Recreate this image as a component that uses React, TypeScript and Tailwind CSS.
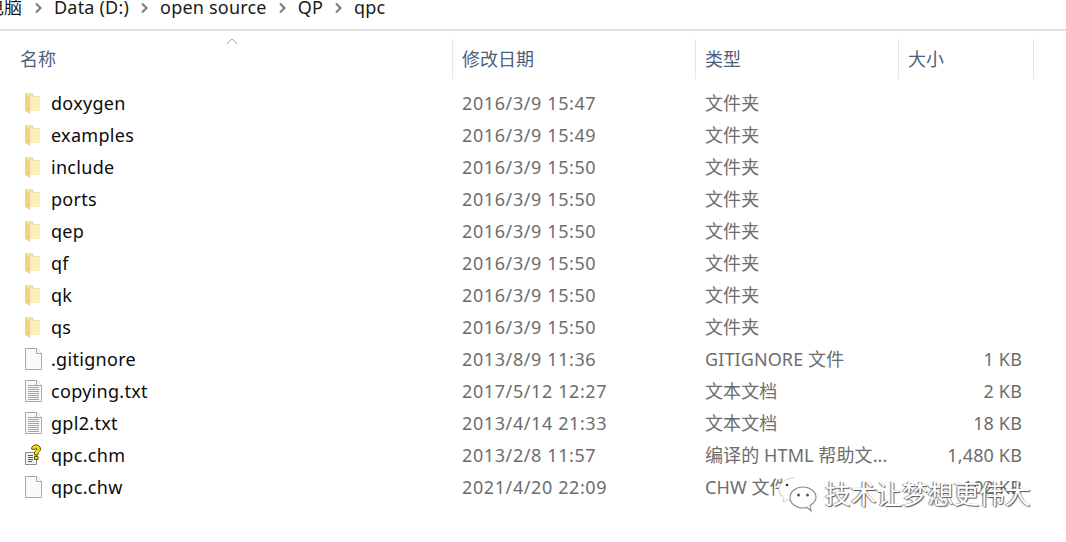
import React from 'react'

type Kind = 'folder' | 'blank' | 'text' | 'help'

type Row = {
  name: string
  date: string
  type: string
  size?: string
  kind: Kind
}

const rows: Row[] = [
  { name: 'doxygen', date: '2016/3/9 15:47', type: '文件夹', kind: 'folder' },
  { name: 'examples', date: '2016/3/9 15:49', type: '文件夹', kind: 'folder' },
  { name: 'include', date: '2016/3/9 15:50', type: '文件夹', kind: 'folder' },
  { name: 'ports', date: '2016/3/9 15:50', type: '文件夹', kind: 'folder' },
  { name: 'qep', date: '2016/3/9 15:50', type: '文件夹', kind: 'folder' },
  { name: 'qf', date: '2016/3/9 15:50', type: '文件夹', kind: 'folder' },
  { name: 'qk', date: '2016/3/9 15:50', type: '文件夹', kind: 'folder' },
  { name: 'qs', date: '2016/3/9 15:50', type: '文件夹', kind: 'folder' },
  { name: '.gitignore', date: '2013/8/9 11:36', type: 'GITIGNORE 文件', size: '1 KB', kind: 'blank' },
  { name: 'copying.txt', date: '2017/5/12 12:27', type: '文本文档', size: '2 KB', kind: 'text' },
  { name: 'gpl2.txt', date: '2013/4/14 21:33', type: '文本文档', size: '18 KB', kind: 'text' },
  { name: 'qpc.chm', date: '2013/2/8 11:57', type: '编译的 HTML 帮助文...', size: '1,480 KB', kind: 'help' },
  { name: 'qpc.chw', date: '2021/4/20 22:09', type: 'CHW 文件', size: '102 KB', kind: 'blank' },
]

const crumbs = ['Data (D:)', 'open source', 'QP', 'qpc']

const Chevron = () => (
  <svg width="7" height="12" viewBox="0 0 7 12" className="mt-[2px] shrink-0">
    <path d="M1 1.500 5.500 6 1 10.500" fill="none" stroke="#808080" strokeWidth="2.200" />
  </svg>
)

const FolderIcon = () => (
  <svg width="15" height="21" viewBox="0 0 15 21">
    <path d="M0 0h8l1 3h6v15H0z" fill="#f6e09a" />
    <path d="M0 1l5 3v17l-5-3z" fill="#f3d27c" />
    <path d="M5 4h10v14H5z" fill="#fcedbd" />
  </svg>
)

const PageIcon = ({ lines = false }: { lines?: boolean }) => (
  <svg width="17" height="22" viewBox="0 0 17 22">
    <path d="M.5.500h11l5 5v16H.500z" fill="#fafafa" stroke="#a8a8a8" />
    <path d="M11.500.500v5h5" fill="#fff" stroke="#a8a8a8" />
    {lines &&
      [5, 7, 9, 11, 13, 15, 17, 19].map((y) => (
        <path key={y} d={`M3 ${y + 0.5}h11`} stroke="#a3a3a3" />
      ))}
  </svg>
)

const HelpIcon = () => (
  <svg width="18" height="22" viewBox="0 0 18 22">
    <path d="M.5 8.500h11v12H.500z" fill="#f4f4f4" stroke="#8c8c8c" />
    <path d="M3 11.500h5M3 13.500h5M3 15.500h5M3 17.500h4" stroke="#555" />
    <path
      d="M6.500 5C6.500 2.500 8.500 1 11 1s4.500 1.500 4.500 4c0 2.200-1.500 3-2.500 4v2H9.500V8.500c0-1.500 2.500-2 2.500-3.500 0-1.200-2-1.200-2 .5z"
      fill="#f5e20f"
      stroke="#5c5200"
      strokeWidth="1"
    />
    <path d="M9.500 12.500H13V15.500H9.500z" fill="#f5e20f" stroke="#5c5200" />
  </svg>
)

const FileIcon = ({ kind }: { kind: Kind }) => {
  if (kind === 'folder') return <FolderIcon />
  if (kind === 'help') return <HelpIcon />
  return <PageIcon lines={kind === 'text'} />
}

const WeChatIcon = () => (
  <svg width="40" height="36" viewBox="0 0 40 36" fill="none">
    <path
      d="M17 1C9 1 2 6 2 12.500c0 3.500 2 6.500 5 8.500L6 25l4.500-2.200c1.500.5 3 .7 4.500.7"
      fill="#fff"
      stroke="#cfcfcf"
      strokeWidth="1"
    />
    <path
      d="M26 10c-7 0-13 4.500-13 10.500S19 31 26 31c1.500 0 2.500-.2 4-.6l4 3.600-1-5.500c3-2 6-4.200 6-8C39 14.500 33 10 26 10z"
      fill="#fff"
      stroke="#8f8f8f"
      strokeWidth="1.200"
    />
    <circle cx="21.500" cy="18" r="1.500" fill="#555" />
    <circle cx="30.500" cy="18" r="1.500" fill="#555" />
    <circle cx="10" cy="8" r="1.300" fill="#333" />
  </svg>
)

const HeaderCell = ({ label, className }: { label: string; className: string }) => (
  <div className={`flex h-[40px] items-center border-r border-[#e5e5e5] pl-[9px] ${className}`}>
    {label}
  </div>
)

export default function App() {
  return (
    <div
      className="relative h-[542px] w-[1066px] overflow-hidden bg-white text-[18px]"
      style={{ fontFamily: '"Noto Sans", "Noto Sans CJK SC", sans-serif' }}
    >
      <div className="flex h-[31px] items-start overflow-hidden border-b-2 border-[#e0e0e0] leading-[14px] text-[#1a1a1a]">
        <div className="ml-[-14px] w-[36px] shrink-0">电脑</div>
        <div className="ml-[13px] flex items-start gap-[12px] tracking-[0.2px]">
          <Chevron />
          {crumbs.map((c, i) => (
            <React.Fragment key={c}>
              {i > 0 && <Chevron />}
              <span className="whitespace-nowrap">{c}</span>
            </React.Fragment>
          ))}
        </div>
      </div>

      <div className="flex h-[56px] items-start pt-[8px] text-[#4c607a]">
        <div className="relative flex h-[40px] w-[453px] items-center border-r border-[#e5e5e5] pl-[20px]">
          名称
          <svg width="12" height="7" viewBox="0 0 12 7" className="absolute left-[226px] top-[-1px]">
            <path d="M.5 6 6 1l5.500 5" fill="none" stroke="#9a9a9a" />
          </svg>
        </div>
        <HeaderCell label="修改日期" className="w-[243px]" />
        <HeaderCell label="类型" className="w-[203px]" />
        <HeaderCell label="大小" className="w-[135px]" />
      </div>

      <div className="flex flex-col">
        {rows.map((row) => (
          <div key={row.name} className="flex h-[32px] items-center">
            <div className="flex w-[453px] items-center text-[#0b0b0b]">
              <div className="ml-[25px] flex w-[26px] shrink-0 items-center">
                <FileIcon kind={row.kind} />
              </div>
              <span className="tracking-[0.3px]">{row.name}</span>
            </div>
            <div className="w-[243px] pl-[9px] tracking-[0.6px] text-[#6d6d6d]">{row.date}</div>
            <div className="w-[203px] whitespace-nowrap pl-[9px] tracking-[0.1px] text-[#6d6d6d]">{row.type}</div>
            <div className="w-[123px] text-right tracking-[0.15px] text-[#6d6d6d]">{row.size}</div>
          </div>
        ))}
      </div>

      <div className="absolute left-[777px] top-[477px] flex items-center gap-[8px]">
        <WeChatIcon />
        <span
          className="whitespace-nowrap text-[25.700px] leading-[34px] text-white"
          style={{ textShadow: '1px 1px 1px #555, -1px 0 1px #777' }}
        >
          技术让梦想更伟大
        </span>
      </div>
    </div>
  )
}
